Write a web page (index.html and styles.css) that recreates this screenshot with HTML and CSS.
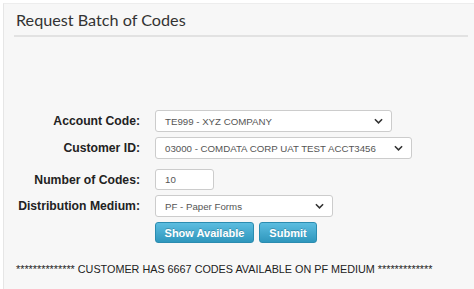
FILE: index.html
```html
<!DOCTYPE html>
<html>
<head>
<meta charset="utf-8">
<link rel="stylesheet" href="styles.css">
</head>
<body>
<div class="panel">
  <h1 class="title">Request Batch of Codes</h1>
  <form class="form">
    <div class="row r1">
      <label class="lbl">Account Code:</label>
      <div class="sel w1"><span>TE999 - XYZ COMPANY</span><svg class="chev" viewBox="0 0 10 6" width="9" height="6"><path d="M1 1l4 4 4-4" fill="none" stroke="#333" stroke-width="1.7"/></svg></div>
    </div>
    <div class="row r2">
      <label class="lbl">Customer ID:</label>
      <div class="sel w2"><span>03000 - COMDATA CORP UAT TEST ACCT3456</span><svg class="chev" viewBox="0 0 10 6" width="9" height="6"><path d="M1 1l4 4 4-4" fill="none" stroke="#333" stroke-width="1.7"/></svg></div>
    </div>
    <div class="row r3">
      <label class="lbl">Number of Codes:</label>
      <div class="inp"><span>10</span></div>
    </div>
    <div class="row r4">
      <label class="lbl">Distribution Medium:</label>
      <div class="sel w4"><span>PF - Paper Forms</span><svg class="chev" viewBox="0 0 10 6" width="9" height="6"><path d="M1 1l4 4 4-4" fill="none" stroke="#333" stroke-width="1.7"/></svg></div>
    </div>
    <div class="row r5">
      <span class="lbl"></span>
      <div class="btns">
        <button type="button" class="btn b1">Show Available</button>
        <button type="button" class="btn b2">Submit</button>
      </div>
    </div>
  </form>
  <p class="msg">************** CUSTOMER HAS 6667 CODES AVAILABLE ON PF MEDIUM *************</p>
</div>
</body>
</html>
```
FILE: styles.css
```css
html, body { margin: 0; padding: 0; background: #fff; }
body { width: 474px; height: 289px; overflow: hidden; font-family: "Liberation Sans", Arial, sans-serif; }
.panel {
  margin: 3px 0 0 3px;
  height: 290px;
  background: #f7f7f7;
  border-left: 1px solid #e6e6e6;
  border-top: 1px solid #ededed;
  box-sizing: border-box;
}
.title {
  margin: 0 6px 0 10px;
  padding: 5px 0 4px 2px;
  font-family: Lato, sans-serif;
  font-weight: 400;
  font-size: 16.2px;
  color: #333;
  border-bottom: 2px solid #e2e2e2;
  line-height: 22px;
}
.form { margin: 73px 0 0 0; display: flex; flex-direction: column; }
.row { display: flex; align-items: center; }
.lbl {
  width: 136px;
  text-align: right;
  font-weight: bold;
  font-size: 12.2px;
  color: #222;
  margin-right: 15px;
}
.sel, .inp {
  box-sizing: border-box;
  height: 22px;
  background: #fff;
  border: 1px solid #ccc;
  border-radius: 3px;
  display: flex;
  align-items: center;
  padding: 0 8px 0 9px;
  font-size: 9.7px;
  color: #555;
  white-space: nowrap;
  overflow: hidden;
}
.sel span { flex: 1; }
.chev { flex: none; }
.w1 { width: 237px; }
.w2 { width: 257px; }
.w4 { width: 178px; }
.inp { width: 59px; height: 21px; }
.r2 { margin-top: 5px; }
.r3 { margin-top: 10px; }
.r4 { margin-top: 5px; }
.r5 { margin-top: 5px; }
.btns { display: flex; gap: 5px; }
.btn {
  height: 21px;
  border: 1px solid #2b8cb0;
  border-radius: 3px;
  background: linear-gradient(#5cbde0, #2f97bd);
  color: #fff;
  font-family: "Liberation Sans", Arial, sans-serif;
  font-weight: bold;
  font-size: 11px;
  padding: 0;
  white-space: nowrap;
  text-shadow: 0 -1px 0 rgba(0,0,0,0.2);
}
.b1 { width: 99px; }
.b2 { width: 58px; }
.msg {
  margin: 20px 0 0 12px;
  font-size: 10.8px;
  color: #222;
}
```
